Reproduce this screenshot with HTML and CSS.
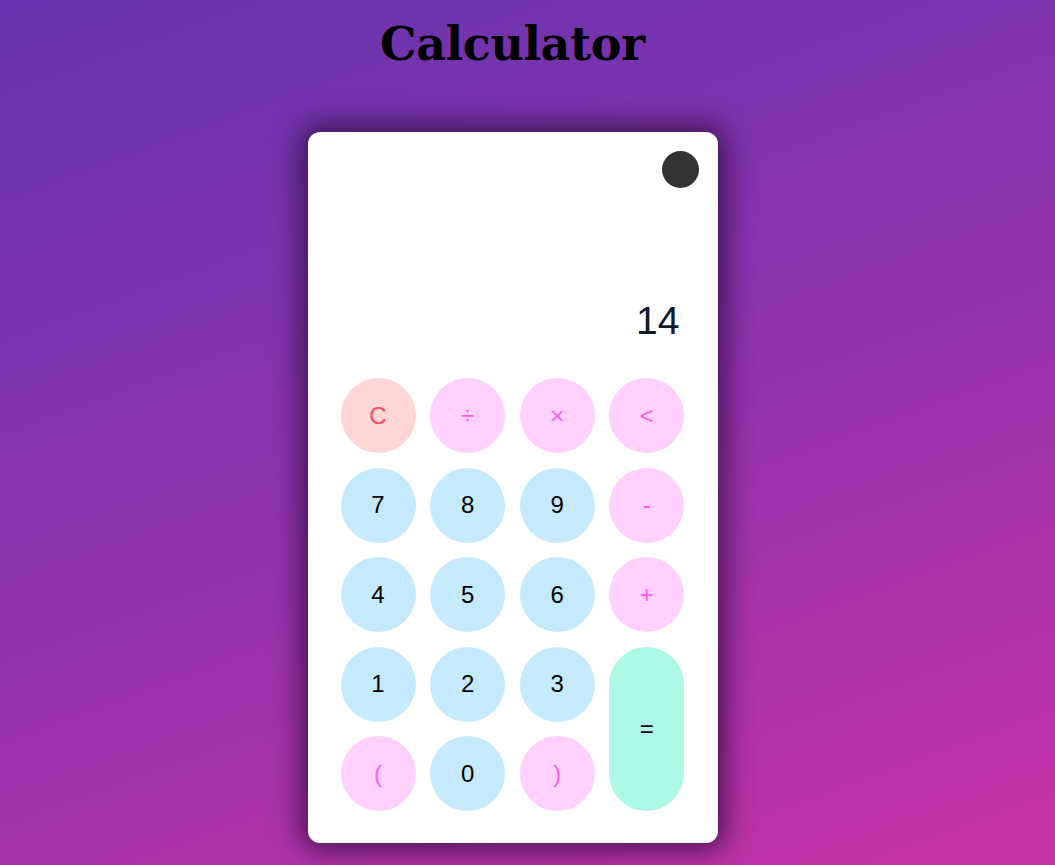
FILE: index.html
```html
<!DOCTYPE html>
<html>
<head>
<meta charset="utf-8">
<link rel="stylesheet" href="styles.css">
</head>
<body>
<h1 class="title">Calculator</h1>
<div class="calc">
  <div class="display">
    <div class="toggle"></div>
    <div class="result">14</div>
  </div>
  <div class="keys">
    <button class="key clear">C</button>
    <button class="key op">÷</button>
    <button class="key op">×</button>
    <button class="key op">&lt;</button>
    <button class="key num">7</button>
    <button class="key num">8</button>
    <button class="key num">9</button>
    <button class="key op">-</button>
    <button class="key num">4</button>
    <button class="key num">5</button>
    <button class="key num">6</button>
    <button class="key op">+</button>
    <button class="key num">1</button>
    <button class="key num">2</button>
    <button class="key num">3</button>
    <button class="key equal">=</button>
    <button class="key op">(</button>
    <button class="key num">0</button>
    <button class="key op">)</button>
  </div>
</div>
</body>
</html>
```
FILE: styles.css
```css
html, body {
  margin: 0;
  height: 100%;
}
body {
  background: linear-gradient(160deg, #6534ae 0%, #8a33ad 45%, #c632a5 100%);
  display: flex;
  flex-direction: column;
  align-items: center;
  font-family: "Liberation Sans", Arial, sans-serif;
  overflow: hidden;
  padding-right: 30px;
  box-sizing: border-box;
}
.title {
  font-family: "DejaVu Serif", Georgia, serif;
  font-weight: bold;
  font-size: 46px;
  line-height: 1;
  margin: 21px 0 0 0;
  color: #000;
  letter-spacing: -0.4px;
}
.calc {
  margin-top: 65px;
  width: 410px;
  height: 711px;
  flex-shrink: 0;
  box-sizing: border-box;
  background: #fff;
  border-radius: 12px;
  box-shadow: 0 0 28px 6px rgba(40, 10, 50, 0.8);
  padding: 19px 33px 32px 33px;
  display: flex;
  flex-direction: column;
}
.display {
  flex: 1;
  display: flex;
  flex-direction: column;
  align-items: flex-end;
  justify-content: space-between;
  padding-bottom: 38px;
  margin-right: -14px;
}
.toggle {
  width: 37px;
  height: 37px;
  border-radius: 50%;
  background: #333;
}
.result {
  font-size: 39px;
  line-height: 1;
  color: #0d1b2a;
  margin-right: 19px;
}
.keys {
  display: grid;
  grid-template-columns: repeat(4, 75px);
  grid-auto-rows: 75px;
  column-gap: 14.6px;
  row-gap: 14.5px;
}
.key {
  border: none;
  border-radius: 50%;
  font-family: "Liberation Sans", Arial, sans-serif;
  font-size: 24px;
  padding: 0;
  display: flex;
  align-items: center;
  justify-content: center;
  cursor: pointer;
}
.num {
  background: #c5eafd;
  color: #000;
}
.op {
  background: #ffd1fc;
  color: #ff5cef;
}
.clear {
  background: #ffd6d6;
  color: #ff4d5c;
}
.equal {
  grid-row: span 2;
  grid-column: 4;
  border-radius: 38px;
  background: #adf8e6;
  color: #000;
}
```
